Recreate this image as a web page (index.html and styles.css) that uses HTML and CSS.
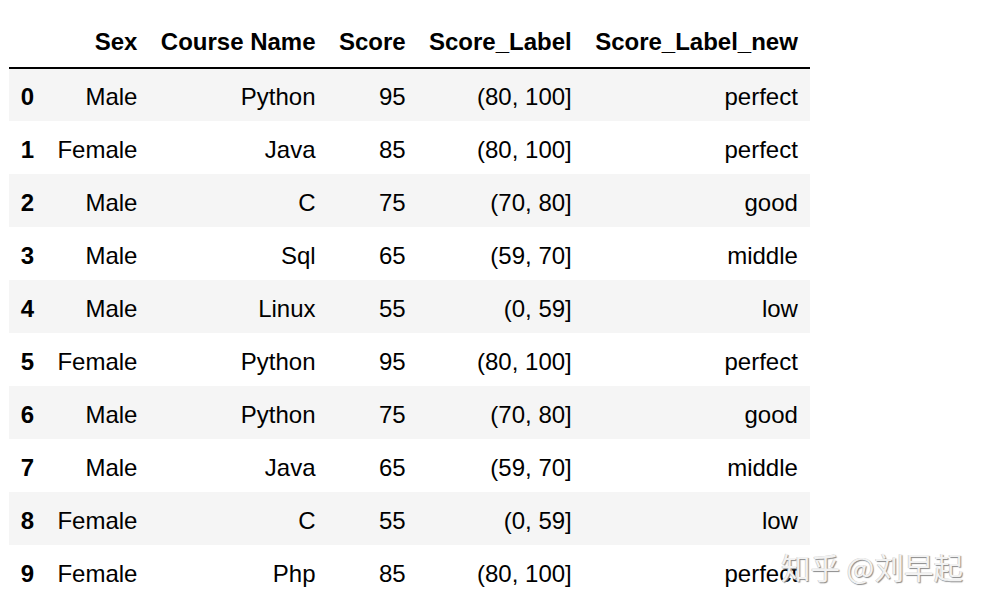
FILE: index.html
```html
<!DOCTYPE html>
<html>
<head>
<meta charset="utf-8">
<link rel="stylesheet" href="styles.css">
</head>
<body>
<div class="wrap">
<table class="df">
  <thead>
    <tr><th></th><th>Sex</th><th>Course Name</th><th>Score</th><th>Score_Label</th><th>Score_Label_new</th></tr>
  </thead>
  <tbody>
    <tr><th>0</th><td>Male</td><td>Python</td><td>95</td><td>(80, 100]</td><td>perfect</td></tr>
    <tr><th>1</th><td>Female</td><td>Java</td><td>85</td><td>(80, 100]</td><td>perfect</td></tr>
    <tr><th>2</th><td>Male</td><td>C</td><td>75</td><td>(70, 80]</td><td>good</td></tr>
    <tr><th>3</th><td>Male</td><td>Sql</td><td>65</td><td>(59, 70]</td><td>middle</td></tr>
    <tr><th>4</th><td>Male</td><td>Linux</td><td>55</td><td>(0, 59]</td><td>low</td></tr>
    <tr><th>5</th><td>Female</td><td>Python</td><td>95</td><td>(80, 100]</td><td>perfect</td></tr>
    <tr><th>6</th><td>Male</td><td>Python</td><td>75</td><td>(70, 80]</td><td>good</td></tr>
    <tr><th>7</th><td>Male</td><td>Java</td><td>65</td><td>(59, 70]</td><td>middle</td></tr>
    <tr><th>8</th><td>Female</td><td>C</td><td>55</td><td>(0, 59]</td><td>low</td></tr>
    <tr><th>9</th><td>Female</td><td>Php</td><td>85</td><td>(80, 100]</td><td>perfect</td></tr>
  </tbody>
</table>
<div class="watermark">知乎 @刘早起</div>
</div>
</body>
</html>
```

FILE: styles.css
```css
html, body {
  margin: 0;
  padding: 0;
  background: #ffffff;
}
.wrap {
  position: relative;
  width: 990px;
  height: 608px;
  overflow: hidden;
  padding: 16px 0 0 9px;
  box-sizing: border-box;
}
.df {
  border-collapse: collapse;
  border-spacing: 0;
  font-family: "Liberation Sans", Arial, Helvetica, sans-serif;
  font-size: 24px;
  color: #000;
}
.df th, .df td {
  text-align: right;
  padding: 0 11.7px;
  white-space: nowrap;
  vertical-align: middle;
  line-height: 24px;
}
.df th {
  font-weight: bold;
}
.df thead tr {
  height: 52px;
}
.df thead th {
  border-bottom: 2px solid #000;
}
.df tbody th, .df tbody td {
  padding-top: 4px;
}
.df tbody tr {
  height: 53px;
}
.df tbody tr:nth-child(odd) {
  background: #f5f5f5;
}
.watermark {
  position: absolute;
  left: 781px;
  top: 548px;
  font-family: "Noto Sans CJK SC", "Liberation Sans", sans-serif;
  font-size: 29.5px;
  line-height: 36px;
  color: #f2f2f2;
  text-shadow: 1px 1px 1px #8a8a8a, -0.5px -0.5px 0 #c8c8c8;
}
```
